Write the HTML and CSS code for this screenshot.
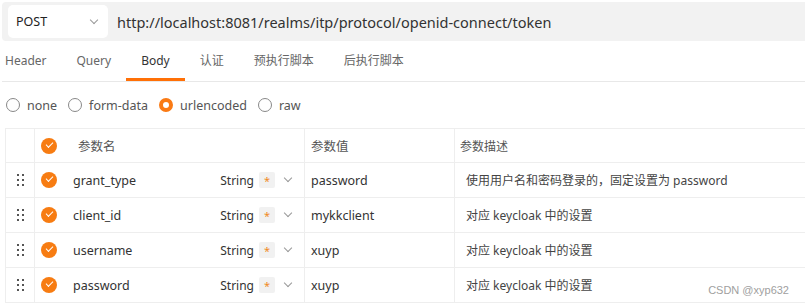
FILE: index.html
```html
<!DOCTYPE html>
<html>
<head>
<meta charset="utf-8">
<link rel="stylesheet" href="styles.css">
</head>
<body>
<div class="page">
  <div class="topbar">
    <div class="method"><span>POST</span><span class="chev"></span></div>
    <div class="url">http://localhost:8081/realms/itp/protocol/openid-connect/token</div>
  </div>
  <div class="tabs">
    <div class="tab">Header</div>
    <div class="tab">Query</div>
    <div class="tab active">Body</div>
    <div class="tab">认证</div>
    <div class="tab">预执行脚本</div>
    <div class="tab">后执行脚本</div>
  </div>
  <div class="radios">
    <label class="radio"><span class="dot"></span>none</label>
    <label class="radio"><span class="dot"></span>form-data</label>
    <label class="radio"><span class="dot on"></span>urlencoded</label>
    <label class="radio"><span class="dot"></span>raw</label>
  </div>
  <div class="table">
    <div class="row head">
      <div class="cell drag"></div>
      <div class="cell name"><span class="check"></span><span class="label hlabel">参数名</span></div>
      <div class="cell val">参数值</div>
      <div class="cell desc hdesc">参数描述</div>
    </div>
    <div class="row">
      <div class="cell drag"><span class="handle"><i></i><i></i><i></i><i></i><i></i><i></i></span></div>
      <div class="cell name"><span class="check"></span><span class="label">grant_type</span><span class="type">String</span><span class="req">*</span><span class="chev"></span></div>
      <div class="cell val">password</div>
      <div class="cell desc">使用用户名和密码登录的，固定设置为 password</div>
    </div>
    <div class="row">
      <div class="cell drag"><span class="handle"><i></i><i></i><i></i><i></i><i></i><i></i></span></div>
      <div class="cell name"><span class="check"></span><span class="label">client_id</span><span class="type">String</span><span class="req">*</span><span class="chev"></span></div>
      <div class="cell val">mykkclient</div>
      <div class="cell desc">对应 keycloak 中的设置</div>
    </div>
    <div class="row">
      <div class="cell drag"><span class="handle"><i></i><i></i><i></i><i></i><i></i><i></i></span></div>
      <div class="cell name"><span class="check"></span><span class="label">username</span><span class="type">String</span><span class="req">*</span><span class="chev"></span></div>
      <div class="cell val">xuyp</div>
      <div class="cell desc">对应 keycloak 中的设置</div>
    </div>
    <div class="row">
      <div class="cell drag"><span class="handle"><i></i><i></i><i></i><i></i><i></i><i></i></span></div>
      <div class="cell name"><span class="check"></span><span class="label">password</span><span class="type">String</span><span class="req">*</span><span class="chev"></span></div>
      <div class="cell val">xuyp</div>
      <div class="cell desc">对应 keycloak 中的设置</div>
    </div>
    <div class="watermark">CSDN @xyp632</div>
  </div>
</div>
</body>
</html>
```
FILE: styles.css
```css
html, body {
  margin: 0;
  padding: 0;
  background: #fff;
}
body {
  font-family: "Noto Sans", "Noto Sans CJK SC", sans-serif;
  font-size: 12.5px;
  color: #333;
  width: 805px;
  height: 306px;
  overflow: hidden;
}
.page {
  padding-top: 2px;
}
.topbar {
  margin-left: 2px;
  height: 39px;
  background: #f2f2f2;
  border-radius: 4px 0 0 4px;
  display: flex;
  align-items: center;
  padding-left: 6px;
}
.method {
  width: 100px;
  height: 33px;
  box-sizing: border-box;
  background: #fff;
  border-radius: 5px;
  display: flex;
  align-items: center;
  justify-content: space-between;
  padding: 0 11px 0 8px;
  font-size: 12.5px;
  color: #222;
}
.chev {
  width: 5px;
  height: 5px;
  border-right: 1px solid #999;
  border-bottom: 1px solid #999;
  transform: rotate(45deg);
  margin-top: -4px;
}
.url {
  margin-left: 9px;
  font-size: 14.5px;
  color: #333;
}
.tabs {
  margin-top: 7px;
  margin-left: 2px;
  padding-left: 3px;
  height: 33px;
  border-bottom: 1px solid #e8e8e8;
  display: flex;
  font-size: 12px;
}
.tab {
  padding: 0 15px 4px;
  line-height: 26px;
  color: #666;
  border-bottom: 3px solid transparent;
}
.tab:first-child {
  padding-left: 0;
}
.tab.active {
  color: #333;
  border-bottom-color: #ff7007;
}
.radios {
  height: 46px;
  display: flex;
  align-items: center;
  padding-left: 6px;
  gap: 11px;
}
.radio {
  display: flex;
  align-items: center;
  gap: 7px;
  color: #555;
}
.dot {
  width: 14px;
  height: 14px;
  box-sizing: border-box;
  border: 1px solid #888;
  border-radius: 50%;
}
.dot.on {
  border: 4px solid #fa7a14;
}
.table {
  position: relative;
  margin-left: 5px;
  border-top: 1px solid #eee;
  border-left: 1px solid #eee;
}
.row {
  display: grid;
  grid-template-columns: 29px 270px 150px 1fr;
  height: 35px;
  border-bottom: 1px solid #eee;
  box-sizing: border-box;
}
.row.head {
  height: 34px;
}
.cell {
  display: flex;
  align-items: center;
  border-right: 1px solid #eee;
  min-width: 0;
}
.drag {
  justify-content: center;
}
.handle {
  display: grid;
  grid-template-columns: 2px 2px;
  column-gap: 3px;
  row-gap: 3px;
}
.handle i {
  width: 2px;
  height: 2px;
  background: #555;
}
.name {
  padding-left: 6px;
}
.check {
  width: 16px;
  height: 16px;
  border-radius: 50%;
  background: #f77c12;
  position: relative;
  flex: none;
}
.check::after {
  content: "";
  position: absolute;
  left: 5px;
  top: 4px;
  width: 6px;
  height: 3px;
  border-left: 1.3px solid #fff;
  border-bottom: 1.3px solid #fff;
  transform: rotate(-45deg);
}
.label {
  margin-left: 16px;
  flex: 1;
}
.hlabel {
  margin-left: 21px;
  color: #555;
}
.type {
  color: #333;
  font-size: 12px;
}
.req {
  width: 16px;
  height: 16px;
  background: #f1f1f1;
  border-radius: 2px;
  color: #f08a24;
  font-size: 11px;
  display: flex;
  align-items: center;
  justify-content: center;
  margin-left: 5px;
  margin-right: 10px;
}
.name .chev {
  margin-right: 13px;
}
.val {
  padding-left: 6px;
}
.desc {
  padding-left: 11px;
  color: #444;
  border-right: none;
  font-size: 12px;
}
.hdesc {
  padding-left: 5px;
  color: #555;
}
.head .val {
  color: #555;
}
.watermark {
  position: absolute;
  right: 16px;
  bottom: 7px;
  font-size: 11px;
  color: #a0a0a0;
  font-family: "Liberation Sans", sans-serif;
}
```
